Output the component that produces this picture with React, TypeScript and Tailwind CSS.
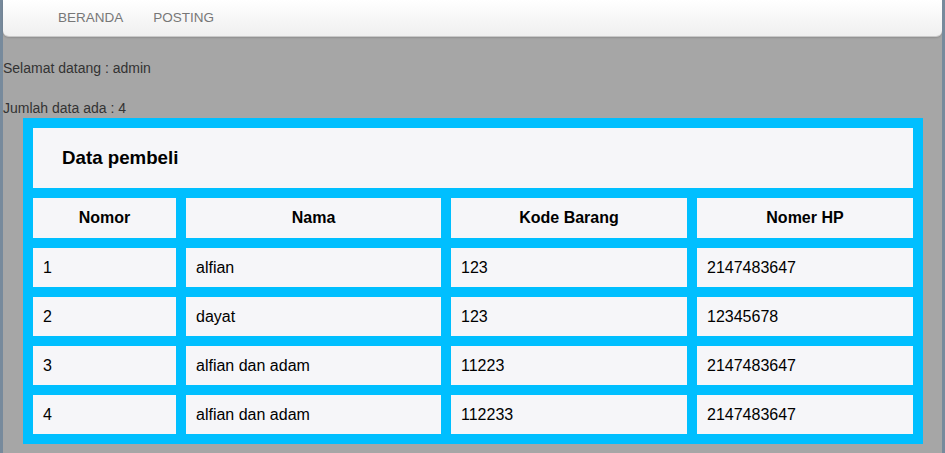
import React from "react";

const rows = [
  ["1", "alfian", "123", "2147483647"],
  ["2", "dayat", "123", "12345678"],
  ["3", "alfian dan adam", "11223", "2147483647"],
  ["4", "alfian dan adam", "112233", "2147483647"],
];

export default function App() {
  return (
    <div
      className="flex h-[453px] w-[945px] overflow-hidden bg-[#a6a6a6]"
      style={{ fontFamily: '"Liberation Sans", Arial, sans-serif' }}
    >
      <div className="w-[3px] shrink-0 bg-[#778a9c]" />
      <div className="flex min-w-0 flex-1 flex-col">
        <div className="flex h-[37px] items-center rounded-b-[6px] border-b border-[#c8c8c8] bg-gradient-to-b from-white to-[#efefef] pl-[55px] shadow-[0_1px_2px_rgba(0,0,0,0.15)]">
          <span className="text-[13.5px] text-[#777]">BERANDA</span>
          <span className="ml-[30px] text-[13.5px] text-[#777]">POSTING</span>
        </div>
        <div className="mt-[23px] text-[14px] leading-[16px] text-[#333]">Selamat datang : admin</div>
        <div className="mt-[24px] text-[14px] leading-[16px] text-[#333]">Jumlah data ada : 4</div>
        <div className="ml-[20px] mt-[2px] grid w-[900px] grid-cols-[143px_255px_236px_216px] gap-[10px] bg-[#00bfff] p-[10px] text-black">
          <div className="col-span-4 flex h-[60px] items-center bg-[#f6f6f9] pl-[29px] text-[18.72px] font-bold">
            Data pembeli
          </div>
          {["Nomor", "Nama", "Kode Barang", "Nomer HP"].map((h) => (
            <div key={h} className="flex h-[40px] items-center justify-center bg-[#f6f6f9] text-[16px] font-bold">
              {h}
            </div>
          ))}
          {rows.map((r, i) =>
            r.map((c, j) => (
              <div key={i + "-" + j} className="flex h-[39px] items-center bg-[#f6f6f9] pl-[10px] text-[16px]">
                {c}
              </div>
            ))
          )}
        </div>
      </div>
      <div className="w-[3px] shrink-0 bg-[#778a9c]" />
    </div>
  );
}
